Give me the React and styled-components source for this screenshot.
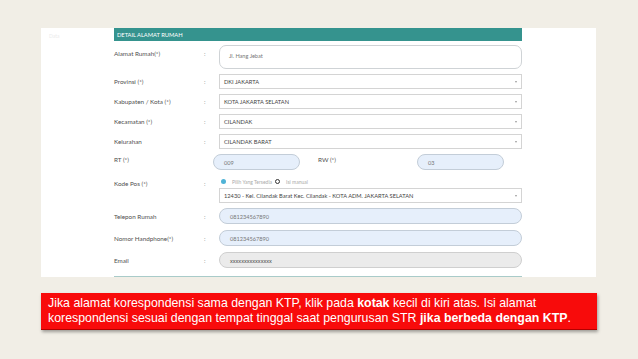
import React from "react";
import styled, { createGlobalStyle } from "styled-components";

const Global = createGlobalStyle`
  html, body { margin: 0; padding: 0; }
  body { background: #f1eee6; width: 638px; height: 359px; overflow: hidden; }
`;

const Page = styled.div`
  padding: 28px 0 0 41px;
  font-family: Lato, "Open Sans", sans-serif;
`;

const Panel = styled.div`
  position: relative;
  width: 555px;
  height: 249px;
  box-sizing: border-box;
  background: #ffffff;
  padding: 0 74px 0 73px;
  display: flex;
  flex-direction: column;
`;

const Ghost = styled.div`
  position: absolute;
  left: 8px;
  top: 5px;
  font-size: 5px;
  color: #ececec;
`;

const Header = styled.div`
  height: 13px;
  background: #35938e;
  color: #ffffff;
  font-size: 5.8px;
  line-height: 13px;
  padding-left: 3px;
  letter-spacing: -0.05px;
`;

const Form = styled.div`
  flex: 1;
  display: flex;
  flex-direction: column;
  border-bottom: 1px solid #a9cbc9;
`;

const Row = styled.div`
  display: grid;
  grid-template-columns: 90px 15px 1fr;
  align-items: ${(p) => (p.$top ? "start" : "center")};
  margin-top: ${(p) => p.$mt}px;
`;

const Label = styled.div`
  font-size: 6.3px;
  color: #505050;
  padding-top: ${(p) => p.$pt || 0}px;
`;

const Colon = styled.div`
  font-size: 6px;
  color: #888;
  padding-top: ${(p) => p.$pt || 0}px;
`;

const TextArea = styled.div`
  height: 24px;
  box-sizing: border-box;
  border: 1px solid #cfd3d6;
  border-radius: 7px;
  font-size: 5.6px;
  color: #777;
  padding: 6px 0 0 9px;
`;

const Select = styled.div`
  position: relative;
  height: 15px;
  box-sizing: border-box;
  border: 1px solid #d4d4d4;
  font-size: 5.7px;
  color: #444;
  display: flex;
  align-items: center;
  padding-left: 4px;
  &::after {
    content: "";
    position: absolute;
    right: 4px;
    top: 6px;
    border-left: 1.5px solid transparent;
    border-right: 1.5px solid transparent;
    border-top: 2px solid #999;
  }
`;

const Pill = styled.div`
  height: 16px;
  box-sizing: border-box;
  border: 1px solid ${(p) => (p.$grey ? "#cfcfcf" : "#c3cdd8")};
  background: ${(p) => (p.$grey ? "#ebebeb" : "#e6effb")};
  border-radius: 8px;
  font-size: 5.6px;
  color: ${(p) => (p.$grey ? "#555" : "#777")};
  display: flex;
  align-items: center;
  padding-left: ${(p) => p.$pl || 10}px;
  width: ${(p) => (p.$w ? p.$w + "px" : "auto")};
  margin-left: ${(p) => p.$ml || 0}px;
`;

const Split = styled.div`
  display: flex;
  align-items: flex-start;
`;

const SubLabel = styled.div`
  font-size: 6.3px;
  color: #505050;
  margin-left: 18px;
  width: 99px;
  padding-top: 2px;
`;

const PosBlock = styled.div`
  display: flex;
  flex-direction: column;
  gap: 2px;
  padding-top: 3px;
`;

const Radios = styled.div`
  display: flex;
  align-items: center;
  height: 9px;
  font-size: 5px;
  color: #aaa;
  padding-left: 2px;
`;

const Dot = styled.span`
  width: 5px;
  height: 5px;
  border-radius: 50%;
  box-sizing: border-box;
  background: ${(p) => (p.$on ? "#4fb3d6" : "#fff")};
  border: ${(p) => (p.$on ? "none" : "1px solid #333")};
  margin-right: 6px;
  margin-left: ${(p) => p.$ml || 0}px;
`;

const Alert = styled.div`
  margin-top: 16px;
  width: 556px;
  height: 37px;
  box-sizing: border-box;
  background: #f80b0b;
  border-bottom: 1px solid #b30000;
  box-shadow: 1px 2px 3px rgba(0, 0, 0, 0.35);
  color: #ffffff;
  font-family: "Liberation Sans", Arial, sans-serif;
  font-size: 12.35px;
  line-height: 14.5px;
  padding: 3px 0 0 7px;
  white-space: nowrap;
`;

export default function App() {
  return (
    <>
      <Global />
      <Page>
        <Panel>
          <Ghost>Data</Ghost>
          <Header>DETAIL ALAMAT RUMAH</Header>
          <Form>
            <Row $mt={4} $top>
              <Label $pt={5}>Alamat Rumah(*)</Label>
              <Colon $pt={5}>:</Colon>
              <TextArea>Jl. Hang Jebat</TextArea>
            </Row>
            <Row $mt={5}>
              <Label>Provinsi (*)</Label>
              <Colon>:</Colon>
              <Select>DKI JAKARTA</Select>
            </Row>
            <Row $mt={5}>
              <Label>Kabupaten / Kota (*)</Label>
              <Colon>:</Colon>
              <Select>KOTA JAKARTA SELATAN</Select>
            </Row>
            <Row $mt={5}>
              <Label>Kecamatan (*)</Label>
              <Colon>:</Colon>
              <Select>CILANDAK</Select>
            </Row>
            <Row $mt={5}>
              <Label>Kelurahan</Label>
              <Colon>:</Colon>
              <Select>CILANDAK BARAT</Select>
            </Row>
            <Row $mt={5} $top>
              <Label $pt={2}>RT (*)</Label>
              <Colon />
              <Split>
                <Pill $w={87} $ml={-6}>009</Pill>
                <SubLabel>RW (*)</SubLabel>
                <Pill $w={87}>03</Pill>
              </Split>
            </Row>
            <Row $mt={4} $top>
              <Label $pt={6}>Kode Pos (*)</Label>
              <Colon $pt={6}>:</Colon>
              <PosBlock>
                <Radios>
                  <Dot $on />
                  Pilih Yang Tersedia
                  <Dot $ml={3} />
                  Isi manual
                </Radios>
                <Select>12430 - Kel. Cilandak Barat Kec. Cilandak - KOTA ADM. JAKARTA SELATAN</Select>
              </PosBlock>
            </Row>
            <Row $mt={5}>
              <Label>Telepon Rumah</Label>
              <Colon>:</Colon>
              <Pill>081234567890</Pill>
            </Row>
            <Row $mt={6}>
              <Label>Nomor Handphone(*)</Label>
              <Colon>:</Colon>
              <Pill>081234567890</Pill>
            </Row>
            <Row $mt={6}>
              <Label>Email</Label>
              <Colon>:</Colon>
              <Pill $grey>xxxxxxxxxxxxxxx</Pill>
            </Row>
          </Form>
        </Panel>
        <Alert>
          Jika alamat korespondensi sama dengan KTP, klik pada <b>kotak</b> kecil di kiri atas. Isi alamat
          <br />
          korespondensi sesuai dengan tempat tinggal saat pengurusan STR <b>jika berbeda dengan KTP</b>.
        </Alert>
      </Page>
    </>
  );
}
